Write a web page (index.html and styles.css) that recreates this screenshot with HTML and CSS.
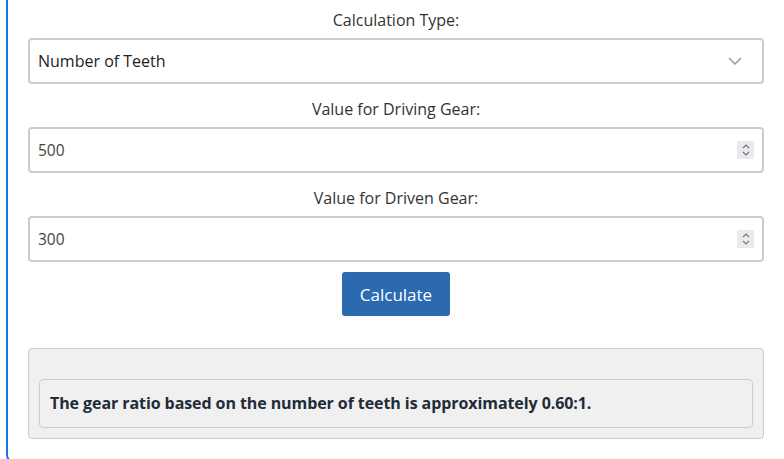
FILE: index.html
```html
<!DOCTYPE html>
<html lang="en">
<head>
  <meta charset="UTF-8" />
  <meta name="viewport" content="width=device-width, initial-scale=1.0"/>
  <title>Gear Ratio Calculator</title>
  <link rel="stylesheet" href="styles.css">
</head>
<body>

  <div class="container">
    <form class="calc-form">
      <div class="form-group">
        <label for="calcType">Calculation Type:</label>
        <div class="field">
          <select id="calcType" name="calc_type">
            <option value="teeth">Number of Teeth</option>
            <option value="diameter">Diameter</option>
            <option value="speed">Speed (RPM)</option>
          </select>
          <svg class="chevron" width="14" height="8" viewBox="0 0 14 8"><path d="M1 1l6 6 6-6" fill="none" stroke="#999" stroke-width="1.5"/></svg>
        </div>
      </div>

      <div class="form-group">
        <label for="driving">Value for Driving Gear:</label>
        <div class="field">
          <input type="text" id="driving" name="driving" value="500" />
          <span class="spinner">
            <svg width="10" height="14" viewBox="0 0 10 14"><path d="M2 5l3-3 3 3M2 9l3 3 3-3" fill="none" stroke="#777" stroke-width="1.2"/></svg>
          </span>
        </div>
      </div>

      <div class="form-group">
        <label for="driven">Value for Driven Gear:</label>
        <div class="field">
          <input type="text" id="driven" name="driven" value="300" />
          <span class="spinner">
            <svg width="10" height="14" viewBox="0 0 10 14"><path d="M2 5l3-3 3 3M2 9l3 3 3-3" fill="none" stroke="#777" stroke-width="1.2"/></svg>
          </span>
        </div>
      </div>

      <div class="actions">
        <button type="button" class="btn">Calculate</button>
      </div>
    </form>

    <div class="result">
      <p class="result-text">The gear ratio based on the number of teeth is approximately 0.60:1.</p>
    </div>
  </div>

</body>
</html>
```

FILE: styles.css
```css
body {
  font-family: "Open Sans", Arial, sans-serif;
  margin: 0;
  background-color: #fff;
  color: #333;
  overflow: hidden;
}

.container {
  margin: -14px 0 0 6px;
  width: 736px;
  border: 2px solid #1a73e8;
  border-radius: 8px;
  padding: 20px 22px 22px 20px;
}

.form-group {
  margin-bottom: 13px;
}

.form-group label {
  display: block;
  text-align: center;
  font-size: 16px;
  line-height: 24px;
  margin-bottom: 6px;
}

.field {
  display: flex;
  align-items: center;
  height: 42px;
  border: 2px solid #ccc;
  border-radius: 4px;
  background-color: #fff;
}

.field select,
.field input {
  flex: 1;
  height: 100%;
  border: none;
  outline: none;
  background: transparent;
  font-family: inherit;
  padding: 0 8px;
  margin: 0;
  -webkit-appearance: none;
  appearance: none;
}

.field select {
  font-size: 16px;
  color: #222;
}

.field input {
  font-size: 15.5px;
  color: #444;
}

.chevron {
  margin-right: 20px;
}

.spinner {
  display: flex;
  align-items: center;
  justify-content: center;
  width: 17px;
  height: 18px;
  margin-right: 8px;
  background-color: #e9e9ee;
}

.actions {
  text-align: center;
  margin-top: -3px;
}

.btn {
  width: 108px;
  height: 44px;
  background-color: #2b69b0;
  color: white;
  border: none;
  border-radius: 3px;
  font-family: inherit;
  font-size: 17px;
  cursor: pointer;
}

.btn:hover {
  background-color: #245a98;
}

.result {
  margin-top: 32px;
  background-color: #f0f0f0;
  border: 1px solid #ccc;
  border-radius: 4px;
  padding: 30px 10px 10px 10px;
}

.result-text {
  margin: 0;
  border: 1px solid #ccc;
  border-radius: 4px;
  padding: 0 10px;
  height: 47px;
  line-height: 47px;
  font-weight: bold;
  font-size: 16px;
  letter-spacing: -0.08px;
  color: #222b38;
}
```
